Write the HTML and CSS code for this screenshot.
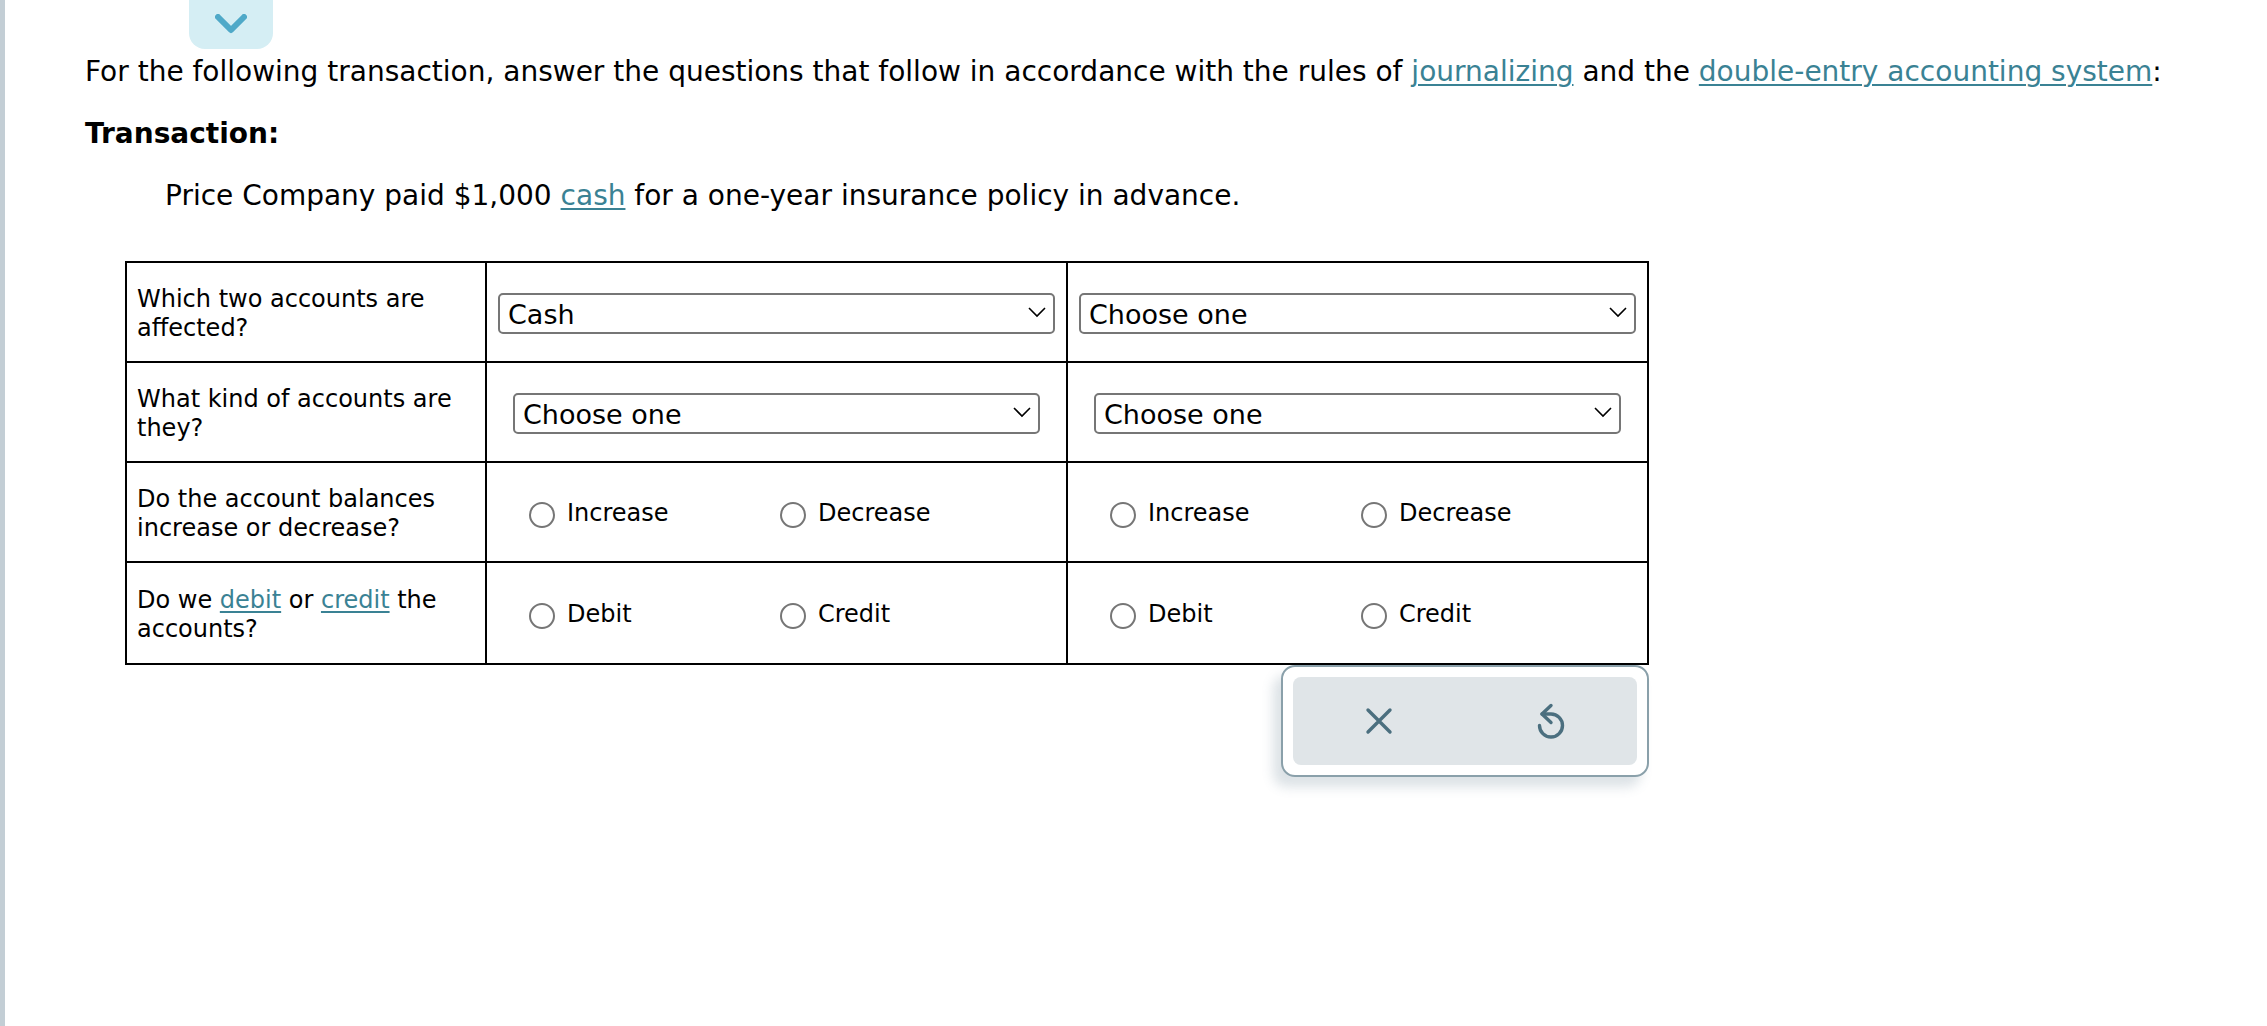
FILE: index.html
```html
<!DOCTYPE html>
<html lang="en">
  <head>
    <meta charset="UTF-8" />
    <meta name="viewport" content="width=device-width, initial-scale=1" />
    <title>Journalizing</title>
    <link rel="stylesheet" href="styles.css">
  </head>
  <body>
    <button class="toggle" type="button" aria-label="Expand">
      <svg width="32" height="22" viewBox="0 0 32 22" fill="none" stroke="#4fa9c8" stroke-width="6" stroke-linecap="round" stroke-linejoin="round">
        <path d="M3 3 L16 16 L29 3" />
      </svg>
    </button>

    <main class="question">
      <p>For the following transaction, answer the questions that follow in accordance with the rules of <a href="#">journalizing</a> and the <a href="#">double-entry accounting system</a>:</p>
      <p><strong>Transaction:</strong></p>
      <p class="indent">Price Company paid $1,000 <a href="#">cash</a> for a one-year insurance policy in advance.</p>

      <form class="answer">
        <table>
          <tr>
            <th scope="row">Which two accounts are affected?</th>
            <td>
              <select aria-label="First account">
                <option>Choose one</option>
                <option selected>Cash</option>
              </select>
            </td>
            <td>
              <select aria-label="Second account">
                <option>Choose one</option>
                <option>Cash</option>
              </select>
            </td>
          </tr>
          <tr class="kind">
            <th scope="row">What kind of accounts are they?</th>
            <td>
              <select aria-label="Kind of first account">
                <option>Choose one</option>
              </select>
            </td>
            <td>
              <select aria-label="Kind of second account">
                <option>Choose one</option>
              </select>
            </td>
          </tr>
          <tr>
            <th scope="row">Do the account balances increase or decrease?</th>
            <td>
              <div class="choices">
                <label><input type="radio" name="balance1" />Increase</label>
                <label><input type="radio" name="balance1" />Decrease</label>
              </div>
            </td>
            <td>
              <div class="choices">
                <label><input type="radio" name="balance2" />Increase</label>
                <label><input type="radio" name="balance2" />Decrease</label>
              </div>
            </td>
          </tr>
          <tr class="side">
            <th scope="row">Do we <a href="#">debit</a> or <a href="#">credit</a> the<br />accounts?</th>
            <td>
              <div class="choices">
                <label><input type="radio" name="side1" />Debit</label>
                <label><input type="radio" name="side1" />Credit</label>
              </div>
            </td>
            <td>
              <div class="choices">
                <label><input type="radio" name="side2" />Debit</label>
                <label><input type="radio" name="side2" />Credit</label>
              </div>
            </td>
          </tr>
        </table>

        <div class="toolbar">
          <div class="tools">
            <button type="button" aria-label="Clear">
              <svg width="36" height="36" viewBox="0 0 36 36">
                <path d="M7 7 L29 29 M29 7 L7 29" />
              </svg>
            </button>
            <button type="reset" aria-label="Reset">
              <svg width="36" height="36" viewBox="0 0 36 36">
                <path d="M9 11 H18 A11.5 11.5 0 1 1 6.5 22.5" />
                <path d="M18 2.5 L9 11 L18 19.5" />
              </svg>
            </button>
          </div>
        </div>
      </form>
    </main>
  </body>
</html>
```
FILE: styles.css
```css
/* Base styles */
body {
  margin: 0;
  min-height: 100vh;
  box-sizing: border-box;
  border-left: 5px solid #c3ced5;
  background: #ffffff;
  color: #000000;
  font-family: Verdana, "DejaVu Sans", sans-serif;
  font-size: 28px;
  line-height: 34px;
}

a {
  color: #3a8294;
  text-decoration-thickness: 2px;
  text-underline-offset: 3px;
}

/* Tab at the top of the page */
.toggle {
  display: flex;
  justify-content: center;
  align-items: center;
  width: 84px;
  height: 49px;
  margin-left: 184px;
  padding: 0;
  border: none;
  border-radius: 0 0 16px 16px;
  background: #d5eef4;
  cursor: pointer;
}

/* Question text */
.question {
  padding: 6px 80px 0;
}

.question p {
  margin: 0 0 28px;
}

.question .indent {
  margin: 0 80px 48px;
}

/* Answer table */
.answer {
  max-width: 1524px;
  margin-left: 40px;
}

table {
  width: 100%;
  table-layout: fixed;
  border-collapse: collapse;
  font-size: 24px;
  line-height: 29px;
}

tr {
  height: 100px;
}

.side {
  height: 102px;
}

th,
td {
  border: 2px solid #000000;
  padding: 2px 11px 0;
}

th {
  width: 338px;
  padding: 4px 10px 0;
  font-weight: normal;
  text-align: left;
}

.kind td {
  padding: 2px 26px 0;
}

select {
  display: block;
  width: 100%;
  height: 41px;
  padding: 2px 40px 0 8px;
  border: 2px solid #767676;
  border-radius: 5px;
  appearance: none;
  background: #ffffff url("data:image/svg+xml,%3Csvg xmlns='http://www.w3.org/2000/svg' width='18' height='12' fill='none' stroke='%23000' stroke-width='1.6'%3E%3Cpath d='M1 1 L9 9 L17 1'/%3E%3C/svg%3E") no-repeat right 7px center;
  color: #000000;
  font-family: inherit;
  font-size: 27px;
}

.choices {
  display: flex;
  padding-left: 31px;
}

.choices label {
  display: flex;
  align-items: center;
  gap: 12px;
  width: 251px;
}

.choices input {
  appearance: none;
  box-sizing: border-box;
  width: 26px;
  height: 26px;
  margin: 3px 0 0;
  border: 2px solid #767676;
  border-radius: 50%;
  background: #ffffff;
}

.choices input:checked {
  border-width: 8px;
}

/* Clear / reset toolbar */
.toolbar {
  box-sizing: border-box;
  width: 368px;
  margin-left: auto;
  padding: 10px;
  border: 2px solid #8aa0aa;
  border-radius: 14px;
  background: #ffffff;
  box-shadow: -8px 10px 12px rgba(80, 110, 130, 0.2);
}

.tools {
  display: flex;
  height: 88px;
  border-radius: 8px;
  background: #e0e5e8;
}

.tools button {
  display: flex;
  flex: 1;
  justify-content: center;
  align-items: center;
  padding: 0;
  border: none;
  background: none;
  cursor: pointer;
}

.tools svg {
  fill: none;
  stroke: #4b6f7f;
  stroke-width: 3.4;
  stroke-linecap: round;
  stroke-linejoin: round;
}
```
